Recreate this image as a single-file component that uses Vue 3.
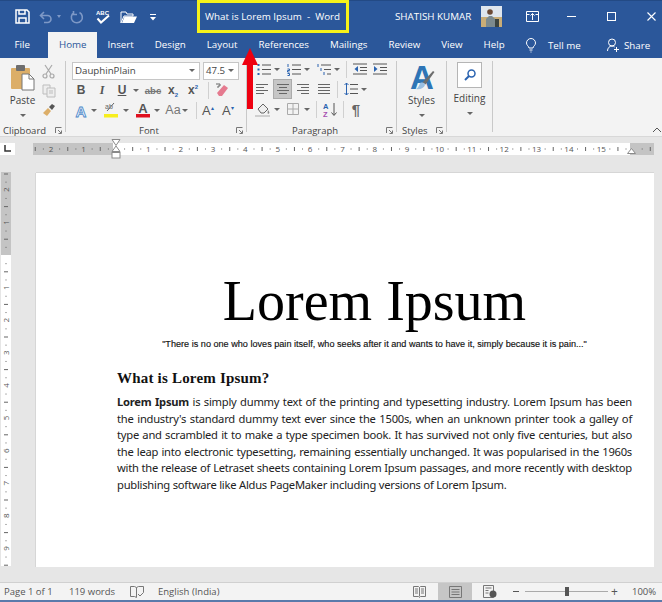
<script setup>
const tabs = ['Insert', 'Design', 'Layout', 'References', 'Mailings', 'Review', 'View', 'Help']

const hx0 = 83
const unit = 32.35
const hMarks = []
for (let i = -10; i <= 66; i++) {
  const u = i / 4
  const x = hx0 + u * (i < 0 ? 32.5 : unit)
  if (x < 1 || x > 620 || i === 0 || i === 64) continue
  if (i % 4 === 0) hMarks.push({ k: 'n', x, t: String(Math.abs(u)) })
  else if (i % 2 === 0) hMarks.push({ k: 't', x })
  else hMarks.push({ k: 'd', x })
}
const vy0 = 83
const vMarks = []
for (let i = -10; i <= 38; i++) {
  const u = i / 4
  const y = vy0 + u * 32.6
  if (y < 1 || y > 393 || i === 0) continue
  if (i % 4 === 0) vMarks.push({ k: 'n', y, t: String(Math.abs(u)) })
  else if (i % 2 === 0) vMarks.push({ k: 't', y })
  else vMarks.push({ k: 'd', y })
}
const lines = [
  "the industry's standard dummy text ever since the 1500s, when an unknown printer took a galley of",
  'type and scrambled it to make a type specimen book. It has survived not only five centuries, but also',
  'the leap into electronic typesetting, remaining essentially unchanged. It was popularised in the 1960s',
  'with the release of Letraset sheets containing Lorem Ipsum passages, and more recently with desktop'
]
</script>

<template>
  <div class="app">
    <header class="titlebar">
      <div class="qat">
        <svg class="save" width="15" height="15" viewBox="0 0 15 15" fill="none" stroke="#fff" stroke-width="1.5"><path d="M1 1h11l2 2v11H1z"/><path d="M4 1v4h6V1M4 14V9h7v5"/></svg>
        <svg class="m9" width="14" height="14" viewBox="0 0 14 14" fill="none" stroke="#7d98c6" stroke-width="1.6"><path d="M5 2 1.5 5.5 5 9M2 5.5h6.5a3.5 3.5 0 0 1 0 7H5"/></svg>
        <span class="caret qcaret m4"></span>
        <svg class="m9" width="14" height="14" viewBox="0 0 14 14" fill="none" stroke="#7d98c6" stroke-width="1.6"><path d="M9.5 2.5A5.5 5.5 0 1 1 4 2.6M3.5 1v3.5H7"/></svg>
        <svg class="m11" width="17" height="18" viewBox="0 0 17 18" fill="none"><text x="1" y="6.5" class="abc">ABC</text><path d="M2.500 10.500 6 14.500 14 7.500" stroke="#fff" stroke-width="2"/></svg>
        <svg class="m8" width="17" height="14" viewBox="0 0 17 14" fill="#fff"><path d="M1 13V2h5l1 2h6v2H4L1 13z" fill="none" stroke="#fff"/><path d="M4.500 6.500H17L14 13H2z"/></svg>
        <svg class="m12" width="8" height="8" viewBox="0 0 8 8" fill="#fff"><path d="M1 1h6v1H1zM1 4h6L4 7.500z"/></svg>
        <span class="doc-title">What is Lorem Ipsum&nbsp; -&nbsp; Word</span>
        <span class="user">SHATISH KUMAR</span>
        <svg class="avatar" width="21" height="21" viewBox="0 0 21 21">
          <rect width="21" height="21" fill="#dfe6ee"/>
          <rect y="11" width="21" height="10" fill="#c9ad77"/>
          <circle cx="9" cy="6" r="2.800" fill="#6b4a36"/>
          <path d="M5 21v-8l3-3h3l3 3v8z" fill="#7c8a8e"/>
          <path d="M14 13h4v8h-4z" fill="#3c4440"/>
        </svg>
        <svg class="display" width="13" height="11" viewBox="0 0 13 11" fill="none" stroke="#fff"><path d="M.5.5h12v10H.5zM.5 3.500h3M9.500 3.500h3"/><path d="M6.500 9V2.500M4.500 4.500l2-2 2 2"/></svg>
        <svg class="minimize" width="9" height="1" viewBox="0 0 9 1"><rect width="9" height="1" fill="#fff"/></svg>
        <svg class="maximize" width="9" height="9" viewBox="0 0 9 9" fill="none" stroke="#fff"><rect x=".5" y=".5" width="8" height="8"/></svg>
        <svg class="close" width="9" height="9" viewBox="0 0 9 9" stroke="#fff" stroke-width="1.100"><path d="m.5.5 8 8M8.500.5l-8 8"/></svg>
      </div>
      <nav class="tabs">
        <span class="tab file">File</span>
        <span class="tab home">Home</span>
        <span v-for="t in tabs" :key="t" class="tab">{{ t }}</span>
        <div class="assist">
          <svg width="10" height="15" viewBox="0 0 10 15" fill="none" stroke="#fff"><path d="M3 10C2.800 8 .5 7.500.5 5a4.500 4.500 0 0 1 9 0C9.500 7.500 7.200 8 7 10zM3.500 12h3M4.500 14h1"/></svg>
          <span class="tell">Tell me</span>
          <svg class="person" width="12" height="14" viewBox="0 0 12 14" fill="none" stroke="#fff"><circle cx="5" cy="4.500" r="3.500"/><path d="M.5 13c0-3 2-5 4.500-5 1.200 0 2 .4 2.600 1M7 11.500h5M9.500 9v5"/></svg>
          <span class="share">Share</span>
        </div>
      </nav>
    </header>

    <section class="ribbon">
      <div class="group clipboard">
        <div class="gbody clip-body">
          <div class="paste">
            <svg width="25" height="27" viewBox="0 0 25 27"><rect x="1" y="4" width="19" height="21" rx="1" fill="#dcae68"/><rect x="6" y="1" width="9" height="6" rx="1" fill="#6e6e6e"/><path d="M12 10h7l5 5v11H12z" fill="#fff" stroke="#777"/><path d="M19 10v5h5" fill="none" stroke="#777"/></svg>
            <span class="big-label">Paste</span>
            <span class="caret"></span>
          </div>
          <div class="clip-tools">
            <svg width="13" height="15" viewBox="0 0 13 15" fill="none" stroke="#a9a9a9" stroke-width="1.200"><circle cx="3" cy="12" r="2"/><circle cx="10" cy="12" r="2"/><path d="M4 10 10 1M9 10 3 1"/></svg>
            <svg width="14" height="14" viewBox="0 0 14 14" fill="#eee" stroke="#bdbdbd"><path d="M1 1h7v9H1z"/><path d="M5 4h8v9H5z"/><path d="M7 7h4M7 9h4" fill="none"/></svg>
            <svg width="14" height="14" viewBox="0 0 14 14"><path d="M1 10 6 5l3 3-4 5z" fill="#dcae68"/><path d="m7 4 3-3 3 2-3 4z" fill="#555"/></svg>
          </div>
        </div>
        <div class="glabel"><span class="lab-clip">Clipboard</span><svg class="launch" width="7" height="7" viewBox="0 0 7 7" fill="none" stroke="#777"><path d="M.5 6V.5H6.500M3 3l3 3M6.500 3.500v3h-3"/></svg></div>
      </div>
      <div class="gsep"></div>

      <div class="group font">
        <div class="gbody font-body">
          <div class="row sel-row">
            <div class="select name"><span>DauphinPlain</span><span class="caret"></span></div>
            <div class="select size"><span>47.5</span><span class="caret"></span></div>
          </div>
          <div class="row">
            <span class="fi b m3">B</span>
            <span class="fi i2 m9">I</span>
            <span class="fi u m8">U</span>
            <span class="caret m5"></span>
            <span class="fi abc2 m4">abc</span>
            <span class="fi xs m3">x<sub>2</sub></span>
            <span class="fi xs m6">x<sup>2</sup></span>
            <span class="vsep m8"></span>
            <svg class="m6" width="14" height="14" viewBox="0 0 14 14"><path d="m2 10 7-8 4 3-6 8H4z" fill="#e57a8f"/><path d="M1 1h4v2H3v2" fill="none" stroke="#666"/></svg>
          </div>
          <div class="row">
            <svg class="m2" width="14" height="15" viewBox="0 0 14 15"><text x="7" y="13.500" text-anchor="middle" class="fxa">A</text></svg>
            <span class="caret m3"></span>
            <svg class="m7" width="14" height="16" viewBox="0 0 14 16"><text x="1" y="7" class="aby">ab</text><path d="m3 9 7-8" stroke="#666"/><rect y="12" width="14" height="3.500" fill="#f7ee1e"/></svg>
            <span class="caret m5"></span>
            <svg class="m7" width="14" height="16" viewBox="0 0 14 16"><text x="7" y="10.500" text-anchor="middle" class="fca">A</text><rect y="12" width="14" height="3.500" fill="#e0101f"/></svg>
            <span class="caret m4"></span>
            <span class="fi aa m5">Aa</span>
            <span class="caret m1"></span>
            <span class="vsep m8"></span>
            <span class="fi grow m5">A<em>▴</em></span>
            <span class="fi shrink m6">A<em>▾</em></span>
          </div>
        </div>
        <div class="glabel"><span class="lab-font">Font</span><svg class="launch" width="7" height="7" viewBox="0 0 7 7" fill="none" stroke="#777"><path d="M.5 6V.5H6.500M3 3l3 3M6.500 3.500v3h-3"/></svg></div>
      </div>
      <div class="gsep"></div>

      <div class="group para">
        <div class="gbody para-body">
          <div class="row">
            <svg class="m7" width="14" height="13" viewBox="0 0 14 13" stroke="#555"><path d="M5 2h9M5 6.500h9M5 11h9"/><path d="M.5 2h2M.5 6.500h2M.5 11h2" stroke="#2a63b0" stroke-width="2"/></svg>
            <span class="caret m3"></span>
            <svg class="m7" width="14" height="13" viewBox="0 0 14 13" stroke="#555"><path d="M5 2h9M5 6.500h9M5 11h9"/><path d="M1 1v3M.5 6h2v1.500h-2v1.500h2M.5 10.500h2v2h-2" stroke="#2a63b0" fill="none"/></svg>
            <span class="caret m3"></span>
            <svg class="m7" width="14" height="13" viewBox="0 0 14 13" stroke="#555"><path d="M4 2h10M7 6.500h7M10 11h4"/><path d="M1 1v3M4 5v3M7 9v3" stroke="#2a63b0"/></svg>
            <span class="caret m3"></span>
            <span class="vsep m6"></span>
            <svg class="m6" width="14" height="12" viewBox="0 0 14 12" stroke="#555"><path d="M0 1h14M7 4.500h7M7 7.500h7M0 11h14"/><path d="M5 3 1.500 6 5 9z" fill="#2a63b0" stroke="none"/></svg>
            <svg class="m6" width="14" height="12" viewBox="0 0 14 12" stroke="#555"><path d="M0 1h14M7 4.500h7M7 7.500h7M0 11h14"/><path d="m1 3 3.500 3L1 9z" fill="#2a63b0" stroke="none"/></svg>
          </div>
          <div class="row">
            <svg class="m6" width="12" height="10" viewBox="0 0 12 10" stroke="#666"><path d="M0 .5h12M0 3.500h8M0 6.500h12M0 9.500h8"/></svg>
            <span class="active m5"><svg width="12" height="10" viewBox="0 0 12 10" stroke="#666"><path d="M0 .5h12M2 3.500h8M0 6.500h12M2 9.500h8"/></svg></span>
            <svg class="m5" width="12" height="10" viewBox="0 0 12 10" stroke="#666"><path d="M0 .5h12M4 3.500h8M0 6.500h12M4 9.500h8"/></svg>
            <svg class="m9" width="12" height="10" viewBox="0 0 12 10" stroke="#666"><path d="M0 .5h12M0 3.500h12M0 6.500h12M0 9.500h12"/></svg>
            <span class="vsep m7"></span>
            <svg class="m6" width="14" height="14" viewBox="0 0 14 14" stroke="#555"><path d="M6 2.500h8M6 7h8M6 11.500h8"/><path d="M2.500 1v12M.5 3l2-2 2 2M.5 11l2 2 2-2" stroke="#2a63b0" fill="none"/></svg>
            <span class="caret m3"></span>
          </div>
          <div class="row">
            <svg class="m5" width="16" height="15" viewBox="0 0 16 15"><path d="m3 7 5-5 5 5-4 4H6z" fill="#eee" stroke="#666"/><path d="M13 8c1 1.500 2 2.500 1 3.500s-2 0-1-3.500z" fill="#888"/><rect y="13" width="15" height="2" fill="#cfcfcf"/></svg>
            <span class="caret m3"></span>
            <svg class="m7" width="12" height="12" viewBox="0 0 12 12" fill="none" stroke="#aaa"><path d="M.5.5h11v11H.5zM6 .5v11M.5 6h11"/></svg>
            <span class="caret m5"></span>
            <span class="vsep m6"></span>
            <svg class="m6" width="14" height="15" viewBox="0 0 14 15"><text x="0" y="7" class="az a1">A</text><text x="0" y="14.500" class="az z1">Z</text><path d="M11 1v12M8.500 10.500 11 13.500l2.500-3" fill="none" stroke="#555"/></svg>
            <span class="vsep m6"></span>
            <span class="fi pil m6">¶</span>
          </div>
        </div>
        <div class="glabel"><span class="lab-para">Paragraph</span><svg class="launch" width="7" height="7" viewBox="0 0 7 7" fill="none" stroke="#777"><path d="M.5 6V.5H6.500M3 3l3 3M6.500 3.500v3h-3"/></svg></div>
      </div>
      <div class="gsep"></div>

      <div class="group styles">
        <div class="gbody big-body">
          <svg class="styles-icon" width="28" height="32" viewBox="0 0 28 32"><text x="2" y="30" class="bigA">A</text><path d="M25 12l1.500 1-9 12.500-3-2z" fill="#6d6d6d"/><path d="M12 24c3-1 5 0 5 2-1 3-5 5-9 4 2-1 3-3 4-6z" fill="#9bbfe2"/></svg>
          <span class="big-label">Styles</span>
          <span class="caret"></span>
        </div>
        <div class="glabel"><span class="lab-styles">Styles</span><svg class="launch" width="7" height="7" viewBox="0 0 7 7" fill="none" stroke="#777"><path d="M.5 6V.5H6.500M3 3l3 3M6.500 3.500v3h-3"/></svg></div>
      </div>
      <div class="gsep"></div>

      <div class="group editing">
        <div class="edit-body">
          <span class="edit-box"><svg width="12" height="12" viewBox="0 0 12 12" fill="none" stroke="#2a63b0" stroke-width="1.500"><circle cx="7.500" cy="4.500" r="3.500"/><path d="M5 7 1 11" stroke-width="2"/></svg></span>
          <span class="big-label">Editing</span>
          <span class="caret"></span>
        </div>
      </div>
      <div class="gsep"></div>
      <div class="rest"><svg width="10" height="6" viewBox="0 0 10 6" fill="none" stroke="#555"><path d="m1 5 4-4 4 4"/></svg></div>
    </section>

    <div class="ruler-row">
      <span class="tabstop"><svg width="7" height="7" viewBox="0 0 7 7"><path d="M1 0v6h6" fill="none" stroke="#333" stroke-width="1.500"/></svg></span>
      <svg class="hruler" width="621" height="12" viewBox="0 0 621 12">
        <rect width="621" height="12" fill="#fff"/>
        <rect width="80" height="12" fill="#c4c4c4"/>
        <rect x="597" width="24" height="12" fill="#c4c4c4"/>
        <template v-for="m in hMarks" :key="m.x">
          <text v-if="m.k === 'n'" :x="m.x" y="9" text-anchor="middle" class="rtext">{{ m.t }}</text>
          <rect v-else-if="m.k === 't'" :x="m.x" y="4" width="1" height="4" fill="#666"/>
          <rect v-else :x="m.x" y="5.500" width="1" height="1" fill="#666"/>
        </template>
      </svg>
      <svg class="indent" width="10" height="20" viewBox="0 0 10 20" fill="#fff" stroke="#8a8a8a"><path d="M1 .5h8L5 6.500z"/><path d="M1 12.500 5 7l4 5.500z"/><rect x="1" y="13.500" width="8" height="5.500"/></svg>
      <svg class="rindent" width="9" height="6" viewBox="0 0 9 6" fill="#fff" stroke="#8a8a8a"><path d="M.5 5.500 4.500.5l4 5z"/></svg>
    </div>

    <main class="workspace">
      <svg class="vruler" width="10" height="394" viewBox="0 0 10 394">
        <rect width="10" height="394" fill="#fff"/>
        <rect width="10" height="83" fill="#c4c4c4"/>
        <template v-for="m in vMarks" :key="m.y">
          <text v-if="m.k === 'n'" x="0" y="0" text-anchor="middle" class="rtext" :transform="`translate(8 ${m.y}) rotate(-90)`">{{ m.t }}</text>
          <rect v-else-if="m.k === 't'" x="3" :y="m.y" width="4" height="1" fill="#666"/>
          <rect v-else x="4.500" :y="m.y" width="1" height="1" fill="#666"/>
        </template>
      </svg>
      <article class="page">
        <h1>Lorem Ipsum</h1>
        <p class="quote">"There is no one who loves pain itself, who seeks after it and wants to have it, simply because it is pain..."</p>
        <h2>What is Lorem Ipsum?</h2>
        <div class="body-text">
          <div class="jl"><strong>Lorem Ipsum</strong> is simply dummy text of the printing and typesetting industry. Lorem Ipsum has been</div>
          <div v-for="l in lines" :key="l" class="jl">{{ l }}</div>
          <div>publishing software like Aldus PageMaker including versions of Lorem Ipsum.</div>
        </div>
      </article>
    </main>

    <footer class="status">
      <span class="s-page">Page 1 of 1</span>
      <span class="s-words">119 words</span>
      <svg class="s-book" width="14" height="13" viewBox="0 0 14 13" fill="none" stroke="#777"><path d="M.5 1.500h4l2 1v10l-2-1h-4zM6.500 2.500l2-1h5v6M8 9l2 2 3.500-3.500"/></svg>
      <span class="s-lang">English (India)</span>
      <svg class="s-read" width="13" height="13" viewBox="0 0 13 13" fill="none" stroke="#777"><path d="M.5 1.500h5l1 1 1-1h5v10h-5l-1 1-1-1h-5zM6.500 2.500v9M2 4h3M2 6h3M2 8h3M8 4h3M8 6h3M8 8h3"/></svg>
      <span class="s-print"><svg width="13" height="12" viewBox="0 0 13 12" fill="none" stroke="#777"><path d="M.5.5h12v11H.5zM2.500 3.500h8M2.500 6h8M2.500 8.500h8"/></svg></span>
      <svg class="s-web" width="14" height="13" viewBox="0 0 14 13" fill="none" stroke="#777"><path d="M.5.5h10v12H.5zM2.500 3h6M2.500 5.500h3M2.500 8h3"/><circle cx="10" cy="9" r="3.500" fill="#555" stroke="none"/></svg>
      <span class="s-minus"></span>
      <span class="s-slider"><span class="s-thumb"></span></span>
      <span class="s-plus">+</span>
      <span class="s-zoom">100%</span>
    </footer>
    <div class="bottom-line"></div>

    <div class="yellow-box"></div>
    <svg class="red-arrow" width="18" height="62" viewBox="0 0 18 62"><path d="M9 0 17 17H12V61H6V17H1z" fill="#ee0010"/></svg>
  </div>
</template>

<style>
html, body { margin: 0; background: #e6e6e6; }
</style>

<style scoped>
.app {
  position: relative;
  width: 662px;
  height: 602px;
  overflow: hidden;
  display: flex;
  flex-direction: column;
  font-family: "Open Sans", "Noto Sans", sans-serif;
  color: #444;
  background: #e6e6e6;
}
.m1 { margin-left: 1px; } .m2 { margin-left: 2px; } .m3 { margin-left: 3px; }
.m4 { margin-left: 4px; } .m5 { margin-left: 5px; } .m6 { margin-left: 6px; }
.m7 { margin-left: 7px; } .m8 { margin-left: 8px; } .m9 { margin-left: 9px; }
.m11 { margin-left: 11px; } .m12 { margin-left: 12px; }

.caret {
  display: block;
  flex: none;
  width: 0;
  height: 0;
  border-top: 3px solid #666;
  border-left: 3px solid transparent;
  border-right: 3px solid transparent;
}

.titlebar { height: 58px; background: #2b579a; color: #fff; flex: none; border-top: 1px solid #234a85; box-sizing: border-box; }
.qat { height: 31px; display: flex; align-items: center; }
.save { margin-left: 15px; }
.qcaret { border-top-color: #7d98c6; border-left-width: 2px; border-right-width: 2px; }
.abc { font: bold 6px "Liberation Sans", sans-serif; fill: #fff; }
.doc-title { margin-left: 48px; font-size: 9.8px; white-space: nowrap; width: 135px; }
.user { margin-left: 55px; font-size: 9.8px; white-space: nowrap; width: 77px; }
.avatar { margin-left: 9px; }
.display { margin-left: 24px; }
.minimize { margin-left: 28px; }
.maximize { margin-left: 31px; }
.close { margin-left: 31px; }

.tabs { height: 26px; display: flex; align-items: center; font-size: 9.75px; }
.tab { height: 26px; line-height: 26px; padding: 0 10.5px; box-sizing: border-box; flex: none; white-space: nowrap; }
.file { margin-left: 4px; margin-right: 8px; }
.home { background: #f3f3f3; color: #2b579a; }
.assist { margin-left: auto; width: 136px; flex: none; display: flex; align-items: center; }
.tell { margin-left: 12px; width: 33px; white-space: nowrap; }
.person { margin-left: 26px; }
.share { margin-left: 5px; }

.ribbon { height: 79px; background: #f3f3f3; display: flex; flex: none; border-bottom: 1px solid #d8d8d8; box-sizing: border-box; }
.group { display: flex; flex-direction: column; flex: none; }
.gbody { flex: 1; }
.gsep { width: 1px; background: #c9c9c9; margin: 3px 0 4px; flex: none; }
.glabel { height: 12px; display: flex; align-items: center; font-size: 9.5px; color: #444; flex: none; }
.launch { margin-left: auto; }
.clipboard { width: 65px; }
.clip-body { display: flex; padding: 6px 0 0 9px; }
.paste { width: 27px; display: flex; flex-direction: column; align-items: center; }
.big-label { font-size: 10px; color: #444; line-height: 14px; margin-top: 2px; }
.paste .caret, .big-body .caret, .edit-body .caret { margin-top: 7px; }
.clip-tools { margin-left: 6px; display: flex; flex-direction: column; gap: 5px; }
.lab-clip { margin-left: 3px; }
.clipboard .launch { margin-right: 3px; }

.font { width: 180px; }
.font-body { padding: 3px 0 0 6px; }
.row { height: 20px; display: flex; align-items: center; }
.sel-row { height: 19px; gap: 3px; }
.select { height: 18px; background: #fff; border: 1px solid #c6c6c6; box-sizing: border-box; display: flex; align-items: center; justify-content: space-between; padding: 0 4px 0 2px; font-size: 9.7px; color: #444; }
.name { width: 128px; }
.size { width: 36px; }
.fi { display: block; flex: none; text-align: center; font-family: "Liberation Sans", sans-serif; color: #555; }
.b { width: 12px; font-weight: bold; font-size: 12px; }
.i2 { width: 12px; font-style: italic; font-weight: bold; font-size: 12px; font-family: "Liberation Serif", serif; }
.u { width: 12px; font-weight: bold; font-size: 12px; text-decoration: underline; }
.abc2 { width: 20px; font-size: 9.5px; text-decoration: line-through; font-weight: bold; color: #777; }
.xs { width: 14px; font-size: 12px; font-weight: bold; }
.xs sub, .xs sup { font-size: 6px; color: #2a63b0; line-height: 0; }
.vsep { display: block; width: 1px; height: 17px; background: #d0d0d0; flex: none; }
.fxa { font: bold 15px "Liberation Sans", sans-serif; fill: #e8f1fb; stroke: #4a86c8; stroke-width: .8px; }
.aby { font: 7px "Liberation Sans", sans-serif; fill: #666; }
.fca { font: bold 13px "Liberation Sans", sans-serif; fill: #555; }
.aa { width: 16px; font-size: 12.5px; color: #777; }
.grow, .shrink { width: 14px; font-size: 13px; text-align: left; color: #555; }
.fi em { font-style: normal; font-size: 6px; color: #2a63b0; vertical-align: 5px; }

.lab-font { margin-left: 73px; }
.font .launch { margin-right: 3px; }

.para { width: 149px; }
.para-body { padding: 1px 0 0 3px; }
.active { width: 19px; height: 20px; flex: none; background: #c6c6c6; border: 1px solid #ababab; box-sizing: border-box; display: flex; align-items: center; justify-content: center; }
.az { font: bold 7.5px "Liberation Sans", sans-serif; }
.a1 { fill: #2a63b0; }
.z1 { fill: #a64fb0; }
.pil { width: 12px; font-size: 15px; color: #666; font-weight: bold; }
.lab-para { margin-left: 45px; }
.para .launch { margin-right: 3px; }

.styles { width: 49px; }
.big-body { display: flex; flex-direction: column; align-items: center; padding-top: 5px; }
.styles-icon { margin-top: -4px; }
.big-body .big-label { margin-top: 2px; }
.bigA { font: bold 33px "Liberation Sans", sans-serif; fill: #2e75b6; }
.lab-styles { margin-left: 5px; }
.styles .launch { margin-right: 3px; }

.editing { width: 45px; }
.edit-body { display: flex; flex-direction: column; align-items: center; padding-top: 4px; }
.edit-box { width: 25px; height: 26px; box-sizing: border-box; background: #fff; border: 1px solid #b5b5b5; display: flex; align-items: center; justify-content: center; }
.edit-body .big-label { margin-top: 3px; }
.rest { flex: 1; display: flex; justify-content: flex-end; align-items: flex-end; padding: 0 0 3px 0; }

.ruler-row { height: 23px; flex: none; display: flex; align-items: center; position: relative; background: #e6e6e6; }
.tabstop { width: 15px; height: 12px; background: #fff; display: flex; align-items: center; justify-content: center; flex: none; }
.hruler { margin-left: 18px; flex: none; }
.rtext { font: 8px "Open Sans", sans-serif; fill: #555; }
.indent { position: absolute; left: 111px; top: 2px; }
.rindent { position: absolute; left: 627px; top: 11px; }

.workspace { flex: 1; min-height: 0; display: flex; align-items: flex-start; padding-top: 13px; box-sizing: border-box; background: #e6e6e6; }
.vruler { margin: -1px 0 0 1px; flex: none; }
.page { width: 618px; height: 394px; margin-left: 25px; background: #fff; box-sizing: border-box; padding: 0 22px 0 81px; flex: none; box-shadow: 0 -1px 0 #d6d6d6, -1px 0 0 #d6d6d6; }
h1 { margin: 96px 0 0; text-align: center; font: 400 56px/64px "Liberation Serif", serif; color: #000; white-space: nowrap; }
.quote { margin: 4px -30px 0; text-align: center; font: 9.12px/14px "Liberation Sans", sans-serif; color: #111; white-space: nowrap; -webkit-text-stroke: .15px #111; }
h2 { margin: 17px 0 0; font: bold 15px/20px "Liberation Serif", serif; color: #111; letter-spacing: .2px; }
.body-text { margin-top: 6px; font: 11.2px/16.5px "Noto Sans", sans-serif; color: #222; letter-spacing: -.24px; }
.jl { text-align: justify; text-align-last: justify; }

.status { height: 18px; flex: none; background: #f3f3f3; border-top: 1px solid #d0d0d0; box-sizing: border-box; display: flex; align-items: center; font-size: 9.5px; color: #555; white-space: nowrap; }
.s-page { margin-left: 4px; width: 48px; }
.s-words { margin-left: 17px; width: 45px; }
.s-book { margin-left: 16px; }
.s-lang { margin-left: 14px; width: 62px; }
.s-read { margin-left: 193px; }
.s-print { margin-left: 12px; width: 34px; height: 17px; background: #c6c6c6; display: flex; align-items: center; justify-content: center; }
.s-web { margin-left: 11px; }
.s-minus { margin-left: 16px; width: 6px; height: 1px; background: #555; }
.s-slider { margin-left: 6px; width: 83px; height: 1px; background: #aaa; position: relative; }
.s-thumb { position: absolute; left: 40px; top: -4px; width: 4px; height: 9px; background: #555; }
.s-plus { margin-left: 3px; font-size: 12px; width: 9px; }
.s-zoom { margin-left: 12px; }
.bottom-line { height: 2px; background: #5a7aab; flex: none; }

.yellow-box { position: absolute; left: 197px; top: 0; width: 152px; height: 33px; box-sizing: border-box; border: 3px solid #f6f21a; pointer-events: none; }
.red-arrow { position: absolute; left: 241px; top: 48px; }
</style>
